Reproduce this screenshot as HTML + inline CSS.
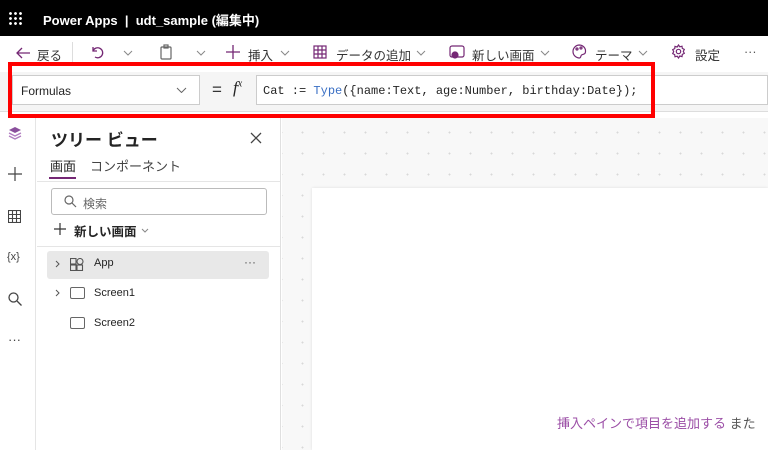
<!DOCTYPE html><html><head><meta charset="utf-8"><style>
*{margin:0;padding:0;box-sizing:border-box}
body{width:768px;height:450px;overflow:hidden;background:#fff;font-family:"Liberation Sans","Noto Sans CJK JP",sans-serif;position:relative;color:#242424}
.a{position:absolute}
.top{left:0;top:0;width:768px;height:36px;background:#000;color:#fff;font-size:13px}
.tb{top:33px;left:0;width:768px;height:29px;font-size:12.5px;color:#333}
.tb .t{position:absolute;top:12px;white-space:nowrap}
.tb svg{position:absolute}
.mono{font-family:"Liberation Mono",monospace}
</style></head><body>
<div class="a top">
<div class="a" style="left:8px;top:11px;width:15px;height:15px;background:radial-gradient(circle,#fff 1.2px,transparent 1.6px) 0 0/5px 5px"></div>
<div class="a" style="left:43px;top:10px;font-weight:bold;font-size:13px">Power Apps &nbsp;|&nbsp; udt_sample (編集中)</div>
</div>
<div class="a" style="left:0;top:72px;width:768px;height:40px;background:#f5f5f5;border-bottom:1px solid #ddd"></div>
<div class="a tb">
<svg style="left:15px;top:13px" width="16" height="14" viewBox="0 0 16 14" fill="none" stroke="#742774" stroke-width="1.3"><path d="M15 7H2M7 2L2 7l5 5"/></svg>
<span class="t" style="left:37px">戻る</span>
<div class="a" style="left:72px;top:9px;width:1px;height:22px;background:#ddd"></div>
<svg style="left:90px;top:12px" width="14" height="14" viewBox="0 0 14 14" fill="none" stroke="#742774" stroke-width="1.3"><path d="M3 2v4h4M3 6a5 5 0 1 1 2 6"/></svg>
<svg style="left:123px;top:17px" width="10" height="6" viewBox="0 0 10 6" fill="none" stroke="#888"><path d="M1 1l4 4 4-4"/></svg>
<svg style="left:159px;top:11px" width="14" height="16" viewBox="0 0 14 16" fill="none" stroke="#666" stroke-width="1.2"><rect x="2" y="3" width="10" height="12" rx="1"/><rect x="5" y="1" width="4" height="3"/></svg>
<svg style="left:196px;top:17px" width="10" height="6" viewBox="0 0 10 6" fill="none" stroke="#888"><path d="M1 1l4 4 4-4"/></svg>
<svg style="left:226px;top:12px" width="14" height="14" viewBox="0 0 14 14" stroke="#742774" stroke-width="1.3"><path d="M7 0v14M0 7h14"/></svg>
<span class="t" style="left:248px">挿入</span>
<svg style="left:280px;top:17px" width="10" height="6" viewBox="0 0 10 6" fill="none" stroke="#888"><path d="M1 1l4 4 4-4"/></svg>
<svg style="left:313px;top:12px" width="14" height="14" viewBox="0 0 14 14" fill="none" stroke="#742774" stroke-width="1.2"><rect x="1" y="1" width="12" height="12"/><path d="M1 5h12M1 9h12M5 1v12M9 1v12"/></svg>
<span class="t" style="left:336px">データの追加</span>
<svg style="left:416px;top:17px" width="10" height="6" viewBox="0 0 10 6" fill="none" stroke="#888"><path d="M1 1l4 4 4-4"/></svg>
<svg style="left:449px;top:12px" width="16" height="14" viewBox="0 0 16 14" fill="none" stroke="#742774" stroke-width="1.2"><rect x="1" y="1" width="14" height="11" rx="2"/><circle cx="6" cy="10" r="3" fill="#742774"/></svg>
<span class="t" style="left:472px">新しい画面</span>
<svg style="left:540px;top:17px" width="10" height="6" viewBox="0 0 10 6" fill="none" stroke="#888"><path d="M1 1l4 4 4-4"/></svg>
<svg style="left:572px;top:11px" width="15" height="15" viewBox="0 0 15 15" fill="none" stroke="#742774" stroke-width="1.2"><path d="M7.5 1a6.5 6.5 0 1 0 0 13c1.5 0 1-2 2-3s4 0 4-3.5A6.5 6 0 0 0 7.5 1z"/><circle cx="5" cy="5" r="1"/><circle cx="9" cy="4" r="1"/></svg>
<span class="t" style="left:595px">テーマ</span>
<svg style="left:638px;top:17px" width="10" height="6" viewBox="0 0 10 6" fill="none" stroke="#888"><path d="M1 1l4 4 4-4"/></svg>
<svg style="left:671px;top:11px" width="15" height="15" viewBox="0 0 15 15" fill="none" stroke="#742774" stroke-width="1.2"><circle cx="7.5" cy="7.5" r="2.2"/><path d="M7.5 1l1.3 1.8 2.2-.6.3 2.2 2 1-1 2 1 2-2 1-.3 2.2-2.2-.6L7.5 14l-1.3-1.8-2.2.6-.3-2.2-2-1 1-2-1-2 2-1 .3-2.2 2.2.6z"/></svg>
<span class="t" style="left:695px">設定</span>
<span class="t" style="left:744px;color:#555">···</span>
</div>
<div class="a" style="left:12px;top:75px;width:188px;height:30px;background:#fff;border:1px solid #ccc;font-size:12px;padding:8px 8px">Formulas<svg class="a" style="right:12px;top:11px" width="11" height="6" viewBox="0 0 11 6" fill="none" stroke="#666"><path d="M1 1l4.5 4.5L10 1"/></svg></div>
<div class="a" style="left:212px;top:80px;font-size:17px;color:#333">=</div>
<div class="a" style="left:233px;top:78px;font-size:17px;font-style:italic;font-family:'Liberation Serif',serif">f<sup style="font-size:10px">x</sup></div>
<div class="a mono" style="left:256px;top:75px;width:512px;height:30px;background:#fff;border:1px solid #ccc;font-size:12px;padding:8px 6px">Cat := <span style="color:#3a6fc4">Type</span>({name:Text, age:Number, birthday:Date});</div>
<div class="a" style="left:8px;top:62px;width:647px;height:56px;border:4px solid #f00"></div>
<!-- left rail -->
<div class="a" style="left:0;top:118px;width:36px;height:332px;background:#fff;border-right:1px solid #e5e5e5"></div>
<svg class="a" style="left:8px;top:126px" width="14" height="14" viewBox="0 0 14 14"><path d="M7 1l6 3-6 3-6-3z" fill="#8a4f9c"/><path d="M1 7l6 3 6-3M1 10l6 3 6-3" fill="none" stroke="#b07cc0" stroke-width="1.3"/></svg>
<svg class="a" style="left:8px;top:167px" width="14" height="14" viewBox="0 0 14 14" stroke="#444" stroke-width="1.2"><path d="M7 0v14M0 7h14"/></svg>
<svg class="a" style="left:8px;top:210px" width="13" height="13" viewBox="0 0 13 13" fill="none" stroke="#444" stroke-width="1.1"><rect x=".5" y=".5" width="12" height="12"/><path d="M.5 4.5h12M.5 8.5h12M4.5 .5v12M8.5 .5v12"/></svg>
<div class="a" style="left:7px;top:251px;font-size:11px;color:#444">{x}</div>
<svg class="a" style="left:8px;top:292px" width="14" height="14" viewBox="0 0 14 14" fill="none" stroke="#444" stroke-width="1.3"><circle cx="5.5" cy="5.5" r="4.5"/><path d="M9 9l4.5 4.5"/></svg>
<div class="a" style="left:8px;top:332px;font-size:13px;color:#444">···</div>
<!-- tree view -->
<div class="a" style="left:37px;top:118px;width:244px;height:332px;background:#fff;border-right:1px solid #e0e0e0">
<div class="a" style="left:14px;top:8px;font-size:17px;font-weight:bold">ツリー ビュー</div>
<svg class="a" style="left:213px;top:14px" width="12" height="12" viewBox="0 0 12 12" stroke="#444" stroke-width="1.3"><path d="M1 1l10 10M11 1L1 11"/></svg>
<div class="a" style="left:13px;top:38px;font-size:13px">画面</div>
<div class="a" style="left:12px;top:59px;width:27px;height:2px;background:#742774"></div>
<div class="a" style="left:53px;top:38px;font-size:13px;color:#444">コンポーネント</div>
<div class="a" style="left:0;top:63px;width:243px;height:1px;background:#e5e5e5"></div>
<div class="a" style="left:14px;top:70px;width:216px;height:27px;border:1px solid #bbb;border-radius:3px;font-size:12px;color:#666;padding:6px 0 0 31px">検索</div>
<svg class="a" style="left:27px;top:77px" width="13" height="13" viewBox="0 0 13 13" fill="none" stroke="#666" stroke-width="1.2"><circle cx="5" cy="5" r="4"/><path d="M8 8l4 4"/></svg>
<svg class="a" style="left:17px;top:105px" width="12" height="12" viewBox="0 0 12 12" stroke="#333" stroke-width="1.2"><path d="M6 0v12M0 6h12"/></svg>
<div class="a" style="left:37px;top:103px;font-size:12.5px;font-weight:bold">新しい画面</div>
<svg class="a" style="left:104px;top:110px" width="8" height="5" viewBox="0 0 8 5" fill="none" stroke="#888"><path d="M1 1l3 3 3-3"/></svg>
<div class="a" style="left:0;top:128px;width:243px;height:1px;background:#e5e5e5"></div>
<div class="a" style="left:10px;top:133px;width:222px;height:28px;background:#e8e8e8;border-radius:3px"></div>
<svg class="a" style="left:18px;top:142px" width="5" height="8" viewBox="0 0 5 8" fill="none" stroke="#555"><path d="M1 1l3 3-3 3"/></svg>
<svg class="a" style="left:33px;top:140px" width="14" height="13" viewBox="0 0 14 13" fill="none" stroke="#555" stroke-width="1.1"><rect x=".5" y=".5" width="5.5" height="5.5"/><rect x=".5" y="7" width="5.5" height="5.5"/><rect x="7" y="7" width="5.5" height="5.5"/><circle cx="10" cy="3.5" r="3"/></svg>
<div class="a" style="left:57px;top:139px;font-size:11px">App</div>
<div class="a" style="left:207px;top:137px;font-size:12px;color:#555">···</div>
<svg class="a" style="left:18px;top:171px" width="5" height="8" viewBox="0 0 5 8" fill="none" stroke="#555"><path d="M1 1l3 3-3 3"/></svg>
<div class="a" style="left:33px;top:169px;width:15px;height:12px;border:1px solid #666;border-radius:2px"></div>
<div class="a" style="left:57px;top:169px;font-size:11px">Screen1</div>
<div class="a" style="left:33px;top:199px;width:15px;height:12px;border:1px solid #666;border-radius:2px"></div>
<div class="a" style="left:57px;top:199px;font-size:11px">Screen2</div>
</div>
<!-- canvas -->
<div class="a" style="left:282px;top:118px;width:486px;height:332px;background-color:#f8f8f8;background-image:radial-gradient(circle,#d8d8d8 0.8px,transparent 1.1px);background-size:21px 21px;background-position:10px 4px"></div>
<div class="a" style="left:312px;top:188px;width:456px;height:262px;background:#fff;box-shadow:0 0 3px rgba(0,0,0,.1)"></div>
<div class="a" style="left:557px;top:413px;font-size:13px;color:#9b4ea6;white-space:nowrap">挿入ペインで項目を追加する <span style="color:#555">また</span></div>
</body></html>
